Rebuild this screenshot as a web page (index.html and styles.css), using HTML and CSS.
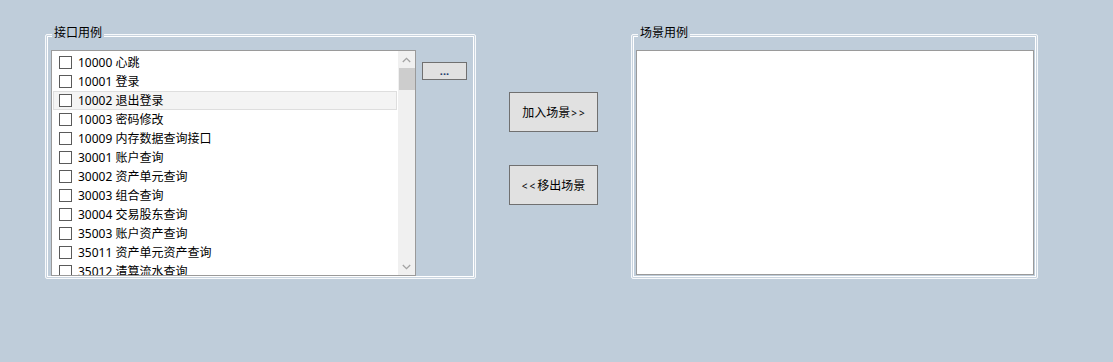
FILE: index.html
```html
<!DOCTYPE html>
<html>
<head>
<meta charset="utf-8">
<link rel="stylesheet" href="styles.css">
</head>
<body>
<div class="form">
  <div class="group group-left">
    <span class="legend">接口用例</span>
    <div class="listbox listbox-left">
      <div class="items">
        <div class="item"><span class="cb"></span>10000 心跳</div>
        <div class="item"><span class="cb"></span>10001 登录</div>
        <div class="item hover"><span class="cb"></span>10002 退出登录</div>
        <div class="item"><span class="cb"></span>10003 密码修改</div>
        <div class="item"><span class="cb"></span>10009 内存数据查询接口</div>
        <div class="item"><span class="cb"></span>30001 账户查询</div>
        <div class="item"><span class="cb"></span>30002 资产单元查询</div>
        <div class="item"><span class="cb"></span>30003 组合查询</div>
        <div class="item"><span class="cb"></span>30004 交易股东查询</div>
        <div class="item"><span class="cb"></span>35003 账户资产查询</div>
        <div class="item"><span class="cb"></span>35011 资产单元资产查询</div>
        <div class="item"><span class="cb"></span>35012 清算流水查询</div>
      </div>
      <div class="scrollbar">
        <div class="arrow">
          <svg width="9" height="6" viewBox="0 0 9 6"><path d="M0.8 5 L4.5 1.3 L8.2 5" fill="none" stroke="#a3a3a3" stroke-width="1.3"/></svg>
        </div>
        <div class="thumb"></div>
        <div class="track"></div>
        <div class="arrow">
          <svg width="9" height="6" viewBox="0 0 9 6"><path d="M0.8 1 L4.5 4.7 L8.2 1" fill="none" stroke="#a3a3a3" stroke-width="1.3"/></svg>
        </div>
      </div>
    </div>
    <button class="btn btn-more">...</button>
  </div>
  <div class="middle">
    <button class="btn btn-big btn-add">加入场景<span class="gt gt-after">&gt;&gt;</span></button>
    <button class="btn btn-big btn-remove"><span class="gt gt-before">&lt;&lt;</span>移出场景</button>
  </div>
  <div class="group group-right">
    <span class="legend">场景用例</span>
    <div class="listbox listbox-right"></div>
  </div>
</div>
</body>
</html>
```

FILE: styles.css
```css
html, body {
  margin: 0;
  padding: 0;
  background: #bfcdda;
  width: 1113px;
  height: 362px;
  overflow: hidden;
  font-family: "Noto Sans", "Noto Sans CJK SC", sans-serif;
  font-size: 12px;
  color: #000;
}
.form {
  display: flex;
  align-items: flex-start;
  padding: 34px 0 0 45px;
}
.group {
  position: relative;
  box-sizing: border-box;
  height: 245px;
  border: 1px solid #f7f9fb;
  border-radius: 2px;
  box-shadow: inset 0 0 0 1px #c9d4df, inset 0 0 0 2px #ffffff;
  display: flex;
  align-items: flex-start;
}
.group-left {
  width: 431px;
  padding: 15px 0 0 5px;
}
.group-right {
  width: 407px;
  margin-left: 33px;
  padding: 15px 0 0 4px;
}
.legend {
  position: absolute;
  left: 6px;
  top: -11px;
  padding: 0 2px;
  background: #bfcdda;
  line-height: 18px;
  font-size: 12px;
}
.listbox {
  box-sizing: border-box;
  background: #fff;
  border: 1px solid #9a9a9a;
  display: flex;
  overflow: hidden;
}
.listbox-left {
  width: 365px;
  height: 226px;
}
.listbox-right {
  width: 398px;
  height: 225px;
}
.items {
  flex: 1;
  padding: 2px 1px 0 1px;
  overflow: hidden;
}
.item {
  box-sizing: border-box;
  height: 19px;
  display: flex;
  align-items: center;
  padding-left: 6px;
  white-space: nowrap;
  line-height: 19px;
  border: 1px solid transparent;
}
.item.hover {
  background: #f4f4f4;
  border-color: #dedede;
}
.cb {
  box-sizing: border-box;
  width: 13px;
  height: 13px;
  border: 1px solid #5a5a5a;
  background: #fff;
  margin-right: 6px;
  margin-left: -1px;
  flex: none;
}
.scrollbar {
  width: 17px;
  flex: none;
  background: #f0f0f0;
  display: flex;
  flex-direction: column;
}
.arrow {
  height: 17px;
  display: flex;
  align-items: center;
  justify-content: center;
  flex: none;
}
.thumb {
  height: 22px;
  margin: 0 0 0 1px;
  background: #cdcdcd;
  flex: none;
}
.track {
  flex: 1;
}
.btn {
  box-sizing: border-box;
  background: #e1e1e1;
  border: 1px solid #707070;
  font-family: "Noto Sans", "Noto Sans CJK SC", sans-serif;
  font-size: 12px;
  color: #000;
  padding: 0;
  margin: 0;
  cursor: default;
}
.btn-more {
  width: 45px;
  height: 18px;
  margin: 12px 0 0 6px;
  line-height: 10px;
  font-size: 11px;
  font-weight: bold;
  color: #1a3a6a;
}
.middle {
  margin-left: 33px;
  margin-top: 58px;
  display: flex;
  flex-direction: column;
  width: 89px;
}
.btn-big {
  width: 89px;
  height: 40px;
}
.btn-remove {
  margin-top: 33px;
}
.gt {
  font-size: 10px;
  letter-spacing: 2px;
}
.gt-after {
  margin-left: 1px;
  margin-right: -2px;
}
```
